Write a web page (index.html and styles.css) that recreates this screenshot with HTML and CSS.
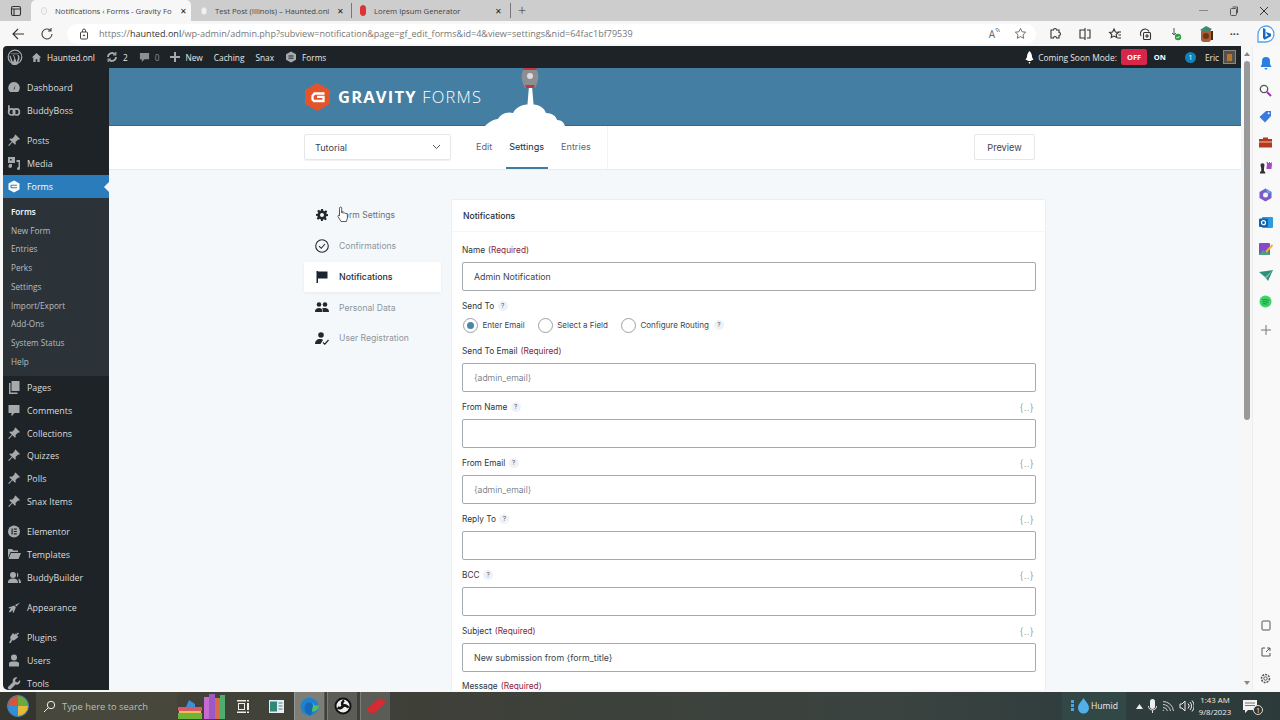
FILE: index.html
```html
<!DOCTYPE html>
<html lang="en">
<head>
<meta charset="utf-8">
<title>Notifications ‹ Forms - Gravity Forms</title>
<link rel="stylesheet" href="styles.css">
</head>
<body>
<div class="tabstrip">
  <div class="strip-btn"><svg width="14" height="14" viewBox="0 0 14 14" fill="none" stroke="#333" stroke-width="1.1"><rect x="2.5" y="2.5" width="9" height="9" rx="1.5"/><path d="M2.5 5h9M5 5v6.5" /></svg></div>
  <div class="tab tab-active"><span class="tab-fav"></span><span class="tab-title">Notifications ‹ Forms - Gravity Fo</span><span class="tab-x">✕</span></div>
  <div class="tab"><span class="tab-fav"></span><span class="tab-title">Test Post (Illinois) – Haunted.onl</span><span class="tab-x">✕</span></div>
  <div class="tab tab-sep"><span class="tab-fav tab-fav-red"></span><span class="tab-title">Lorem Ipsum Generator</span><span class="tab-x">✕</span></div>
  <div class="tab-plus">+</div>
  <div class="win-controls">
    <span class="win-min"></span>
    <svg width="10" height="10" viewBox="0 0 10 10" fill="none" stroke="#555"><rect x="1.5" y="2.5" width="6" height="7" rx="1"/><path d="M3.5 1h5v6"/></svg>
    <svg width="10" height="10" viewBox="0 0 10 10" fill="none" stroke="#333"><path d="M1 1l8 8M9 1l-8 8"/></svg>
  </div>
</div>
<div class="toolbar">
  <svg class="tb-back" width="14" height="14" viewBox="0 0 14 14" fill="none" stroke="#333" stroke-width="1.1"><path d="M13 7H2M7 2L2 7l5 5"/></svg>
  <svg class="tb-reload" width="14" height="14" viewBox="0 0 14 14" fill="none" stroke="#444" stroke-width="1.1"><path d="M12 7a5 5 0 1 1-1.6-3.7M11 1v3H8"/></svg>
  <div class="urlbar">
    <svg width="10" height="12" viewBox="0 0 10 12" fill="none" stroke="#444"><rect x="1.5" y="4" width="7" height="7" rx="1"/><path d="M3.5 4V2.5a1.5 1.5 0 0 1 3 0V4"/><circle cx="5" cy="7.5" r=".6" fill="#444"/></svg>
    <span class="url"><span class="url-dim">https://</span>haunted.onl<span class="url-dim">/wp-admin/admin.php?subview=notification&amp;page=gf_edit_forms&amp;id=4&amp;view=settings&amp;nid=64fac1bf79539</span></span>
    <span class="url-icons">
      <span class="read-aloud">A<svg width="5" height="8" viewBox="0 0 5 8" fill="none" stroke="#777" stroke-width=".8"><path d="M.5 1.500a2.500 2.500 0 0 1 2 2.500M.5 0a4 4 0 0 1 4 4"/></svg></span>
      <svg width="13" height="13" viewBox="0 0 14 14" fill="none" stroke="#666"><path d="M7 1.5l1.7 3.6 3.9.5-2.9 2.7.8 3.9L7 10.3l-3.5 1.9.8-3.900L1.400 5.600l3.900-.5z"/></svg>
    </span>
  </div>
  <div class="tb-icons">
    <svg width="14" height="14" viewBox="0 0 14 14" fill="none" stroke="#333" stroke-width="1.1"><path d="M3 3h2.500a1.500 1.500 0 0 1 3 0H11v2.500a1.500 1.500 0 0 1 0 3V11H8.500a1.500 1.500 0 0 0-3 0H3z"/></svg>
    <svg width="14" height="14" viewBox="0 0 14 14" fill="none" stroke="#333" stroke-width="1.1"><path d="M7 1v12M7 3H2v8h5M9 3h3v8H9"/></svg>
    <svg width="14" height="14" viewBox="0 0 14 14" fill="none" stroke="#333" stroke-width="1.1"><path d="M6 2l1.400 3 3 .4-2.200 2.100.6 3L6 9l-2.800 1.500.6-3L1.600 5.400l3-.4zM10 5h3M10.500 8H13M9.500 11H13"/></svg>
    <svg width="14" height="14" viewBox="0 0 14 14" fill="none" stroke="#333" stroke-width="1.1"><path d="M11 4.500A4.500 4.500 0 1 0 3 9"/><rect x="5.500" y="5.500" width="7" height="7" rx="1"/><path d="M9 7v4M7 9h4"/></svg>
    <svg width="14" height="14" viewBox="0 0 14 14" fill="none"><path d="M6 1v7M4 6l2 2 2-2" stroke="#555"/><circle cx="10" cy="10" r="3.200" fill="#2f9e44"/><path d="M8.500 10l1.100 1.100 1.900-2" stroke="#fff"/></svg>
    <svg width="16" height="18" viewBox="0 0 16 18"><rect x="3" y="4" width="10" height="13" rx="3" fill="#a5603a"/><path d="M2 5l6-4 6 3-3 2H5z" fill="#3b8a77"/><circle cx="8" cy="11" r="3" fill="#6d3517"/><rect x="13" y="6" width="2" height="9" fill="#4a2a12"/></svg>
    <span class="tb-dots">···</span>
    <svg class="tb-bing" width="22" height="22" viewBox="0 0 22 22" fill="none"><path d="M3 11a8 8 0 1 1 8 8H3z" stroke="#5aa2e8" stroke-width="1.300" fill="#fff"/><path d="M8 5l2.500 1v8l3-1.800-1.500-.8-1-2.400 5 1.800v2.500l-6.500 3.500L8 15z" fill="#1668c4"/></svg>
  </div>
</div>
<div class="main">
  <div class="wp">
    <header class="adminbar">
      <div class="ab-left">
        <svg class="ab-wp" width="16" height="16" viewBox="0 0 16 16"><circle cx="8" cy="8" r="6.800" fill="none" stroke="#a7aaad" stroke-width="1.200"/><path d="M3.300 6.200L6 13.200l1.300-3.800L6 6h1l2.600 7.200 1.200-3.700c.5-1.500.2-2.600-.7-3.500H11.500c1 .9 1.400 2.500.8 4.200l-2 5.400a6 6 0 0 1-5.400-.2L2.400 7z M4 4.400h8l-.8.800H4.800z" fill="#a7aaad"/></svg>
        <span class="ab-item"><svg width="11" height="11" viewBox="0 0 12 12"><path d="M6 1L.8 6H2.500v5h2.600V7.800h1.800V11h2.600V6h1.700z" fill="#a7aaad"/></svg>Haunted.onl</span>
        <span class="ab-item ab-upd"><svg width="12" height="12" viewBox="0 0 12 12" fill="none" stroke="#a7aaad" stroke-width="1.800"><path d="M2 6a4 4 0 0 1 7-2.600M10 6a4 4 0 0 1-7 2.600"/><path d="M9.800 1v3H7M2.200 11V8H5" stroke-width="1.200"/></svg>2</span>
        <span class="ab-item ab-com"><svg width="11" height="11" viewBox="0 0 12 12"><path d="M1 1h10v7H6l-3 3V8H1z" fill="#8c8f94"/></svg><span class="ab-dim">0</span></span>
        <span class="ab-item"><svg width="10" height="10" viewBox="0 0 10 10"><path d="M4 0h2v4h4v2H6v4H4V6H0V4h4z" fill="#a7aaad"/></svg>New</span>
        <span class="ab-item">Caching</span>
        <span class="ab-item">Snax</span>
        <span class="ab-item"><svg width="12" height="12" viewBox="0 0 12 12"><path d="M6 .5l5 2.800v5.400l-5 2.800-5-2.800V3.300z" fill="#a7aaad"/><path d="M3.500 5h5M3.500 7.200h5" stroke="#1d2327"/></svg>Forms</span>
      </div>
      <div class="ab-right">
        <svg width="9" height="13" viewBox="0 0 9 13"><path d="M4.500 0C6.500 2 7 4 7 6l1.500 3H6.500v1h-4V9H.5L2 6c0-2 .5-4 2.500-6zM3.500 11h2l-1 2z" fill="#fff"/></svg>
        <span class="coming">Coming Soon Mode:</span>
        <span class="off">OFF</span>
        <span class="on">ON</span>
        <span class="badge">1</span>
        <span class="ab-eric">Eric</span>
        <span class="avatar"><span></span></span>
      </div>
    </header>
    <div class="wp-body">
      <nav class="sidebar">
        <div class="menu-group">
          <a class="mi"><svg class="mi-ic" width="13" height="13" viewBox="0 0 13 13"><path d="M6.500 1a5.800 5.800 0 0 0-5 8.700l1 1.300h8l1-1.300a5.800 5.800 0 0 0-5-8.700zm.5 7.500H6L8 4z" fill="#a7aaad"/></svg>Dashboard</a>
          <a class="mi"><svg class="mi-ic" width="15" height="13" viewBox="0 0 15 13" fill="none" stroke="#a7aaad" stroke-width="1.800"><circle cx="5" cy="8" r="3.300"/><circle cx="10" cy="8" r="3.300"/><path d="M2 8V1"/></svg>BuddyBoss</a>
        </div>
        <div class="menu-group">
          <a class="mi"><svg class="mi-ic" width="13" height="13" viewBox="0 0 13 13"><path d="M8 .5l4.500 4.500-1 .8-.8-.3L8 8l.3 2-.8.8-2.500-2.500-3.500 3.700-.8-.7 3.600-3.600L1.800 5.200l.8-.8 2 .3L7.300 2 7 1.300z" fill="#a7aaad"/></svg>Posts</a>
          <a class="mi"><svg class="mi-ic" width="14" height="14" viewBox="0 0 14 14"><path d="M1 1h7v6H1zM3 3v1.500h1.500V3zM9.500 4H13v8.500a1.500 1.500 0 1 1-1.500-1.500V6h-2zM2 8h3v2a1.800 1.800 0 1 1-1.500-1.700H2z" fill="#a7aaad"/></svg>Media</a>
          <a class="mi mi-current"><svg class="mi-ic" width="13" height="13" viewBox="0 0 13 13"><path d="M6.500.5l5.500 3v6l-5.500 3-5.500-3v-6z" fill="#fff"/><path d="M3.500 5.200h6M3.500 7.800h6M3.500 5.200v2.600" stroke="#2c7fbd" stroke-width="1.100" fill="none"/></svg>Forms</a>
          <div class="submenu">
            <a class="si si-on">Forms</a><a class="si">New Form</a><a class="si">Entries</a><a class="si">Perks</a><a class="si">Settings</a><a class="si">Import/Export</a><a class="si">Add-Ons</a><a class="si">System Status</a><a class="si">Help</a>
          </div>
          <a class="mi"><svg class="mi-ic" width="13" height="14" viewBox="0 0 13 14"><path d="M4 1h8v10H4z M1.500 3H3v9.500h7V14H1.500z" fill="#a7aaad"/></svg>Pages</a>
          <a class="mi"><svg class="mi-ic" width="13" height="13" viewBox="0 0 13 13"><path d="M1 1h11v8H7l-3 3.500V9H1z" fill="#a7aaad"/></svg>Comments</a>
          <a class="mi"><svg class="mi-ic" width="13" height="13" viewBox="0 0 13 13"><path d="M8 .5l4.500 4.500-1 .8-.8-.3L8 8l.3 2-.8.8-2.500-2.500-3.500 3.700-.8-.7 3.600-3.600L1.800 5.200l.8-.8 2 .3L7.300 2 7 1.300z" fill="#a7aaad"/></svg>Collections</a>
          <a class="mi"><svg class="mi-ic" width="13" height="13" viewBox="0 0 13 13"><path d="M8 .5l4.500 4.500-1 .8-.8-.3L8 8l.3 2-.8.8-2.500-2.500-3.500 3.700-.8-.7 3.600-3.600L1.800 5.200l.8-.8 2 .3L7.300 2 7 1.300z" fill="#a7aaad"/></svg>Quizzes</a>
          <a class="mi"><svg class="mi-ic" width="13" height="13" viewBox="0 0 13 13"><path d="M8 .5l4.500 4.500-1 .8-.8-.3L8 8l.3 2-.8.8-2.500-2.500-3.500 3.700-.8-.7 3.600-3.600L1.800 5.200l.8-.8 2 .3L7.300 2 7 1.300z" fill="#a7aaad"/></svg>Polls</a>
          <a class="mi"><svg class="mi-ic" width="13" height="13" viewBox="0 0 13 13"><path d="M8 .5l4.500 4.500-1 .8-.8-.3L8 8l.3 2-.8.8-2.500-2.500-3.500 3.700-.8-.7 3.600-3.600L1.800 5.200l.8-.8 2 .3L7.300 2 7 1.300z" fill="#a7aaad"/></svg>Snax Items</a>
        </div>
        <div class="menu-group">
          <a class="mi"><svg class="mi-ic" width="13" height="13" viewBox="0 0 13 13"><circle cx="6.500" cy="6.500" r="6" fill="#a7aaad"/><path d="M4 3.500h1.200v6H4zM6.300 3.500h3v1.200h-3zM6.300 5.900h3v1.200h-3zM6.300 8.300h3v1.200h-3z" fill="#1d2327"/></svg>Elementor</a>
          <a class="mi"><svg class="mi-ic" width="14" height="12" viewBox="0 0 14 12"><path d="M1 1h4l1.500 1.500H11V4H3.500L1 10zM4 5h10l-2.500 6H1.500z" fill="#a7aaad"/></svg>Templates</a>
          <a class="mi"><svg class="mi-ic" width="14" height="13" viewBox="0 0 14 13"><circle cx="6" cy="4" r="3" fill="#a7aaad"/><path d="M1 12c0-3.500 2-4.500 5-4.500s5 1 5 4.500zM10 1.500a3 3 0 0 1 0 5M11.500 7.500c1.500.5 2.500 1.700 2.500 4.500h-2" fill="#a7aaad"/></svg>BuddyBuilder</a>
        </div>
        <div class="menu-group">
          <a class="mi"><svg class="mi-ic" width="13" height="13" viewBox="0 0 13 13"><path d="M12.500 1.500L7.500 4 9 5.500zM6.800 4.600L1 6.500l.6 1 1.800-.4-2 3.600 1 .8 3-2.500-.2 2.200 1 .6L8.400 6.200z" fill="#a7aaad"/></svg>Appearance</a>
        </div>
        <div class="menu-group">
          <a class="mi"><svg class="mi-ic" width="13" height="13" viewBox="0 0 13 13"><path d="M9 1.500L7 3.500 5.500 2 3 5.500c-.5 1-.3 2 .3 2.800L1.500 12h1.700l1.500-2.700c1 .3 2 .2 2.800-.5L11 6 9.500 4.500l2-2-1-1-2 2-.5-.5 1-1z" fill="#a7aaad"/></svg>Plugins</a>
          <a class="mi"><svg class="mi-ic" width="12" height="13" viewBox="0 0 12 13"><circle cx="6" cy="3.500" r="3" fill="#a7aaad"/><path d="M1 12.500V9.500C1 8 2.500 7.500 6 7.500s5 .5 5 2v3z" fill="#a7aaad"/></svg>Users</a>
          <a class="mi"><svg class="mi-ic" width="13" height="13" viewBox="0 0 13 13"><path d="M12.500 3L10 5.500 8 4.800 7.500 3 10 .5A3.500 3.500 0 0 0 5.500 5L1 9.500a1.700 1.700 0 0 0 2.500 2.500L8 7.500a3.500 3.500 0 0 0 4.500-4.500z" fill="#a7aaad"/></svg>Tools</a>
        </div>
      </nav>
      <main class="content">
        <div class="banner">
          <div class="banner-inner">
            <svg class="gf-mark" width="27" height="28" viewBox="0 0 27 28"><path d="M13.500 0L26 7v14l-12.500 7L1 21V7z" fill="#e4542b"/><path d="M20.500 10.500H10.500L8.500 13v3.500l1.500 1.500H19.500v-4.200h-6.500" fill="none" stroke="#fff" stroke-width="2.300"/></svg>
            <span class="gf-name"><b>GRAVITY</b> FORMS</span>
          </div>
          <svg class="rocket" width="90" height="58" viewBox="0 0 90 58">
            <path d="M44 18h3l2 24h-7z" fill="#fff"/>
            <path d="M0 58c3-3 8-7 13-7 2-4 8-8 15-6 3-6 11-10 17-8 7-2 14 2 16 8 6 0 10 3 11 7 5 0 7 3 8 6z" fill="#fff"/>
            <path d="M45 0h-6c-2 4-3 8-2 12l2 6 1 2h10l1-2 2-6c1-4 0-8-2-12z" fill="#8b8f93"/>
            <path d="M39 0h12l1 2H38zM40 17h10l-1 3h-8z" fill="#c8353a"/>
            <circle cx="45" cy="8" r="3" fill="#dcdcdc"/>
          </svg>
        </div>
        <div class="formbar">
          <div class="formbar-inner">
            <div class="form-select"><span>Tutorial</span><svg width="9" height="6" viewBox="0 0 9 6" fill="none" stroke="#555"><path d="M1 1l3.500 3.500L8 1"/></svg></div>
            <div class="form-tabs">
              <span class="ftab">Edit</span>
              <span class="ftab ftab-on">Settings</span>
              <span class="ftab">Entries</span>
            </div>
            <span class="preview">Preview</span>
          </div>
        </div>
        <div class="page">
          <div class="page-inner">
            <ul class="settings-nav">
              <li class="sn-item"><svg class="sn-ic" width="12" height="12" viewBox="0 0 12 12"><path d="M5 0h2l.3 1.700 1.100.5L9.900 1.200l1.400 1.400-1 1.500.5 1.100L12 5v2l-1.700.3-.5 1.100 1 1.500-1.400 1.400-1.500-1-1.100.5L7 12H5l-.3-1.700-1.100-.5-1.500 1L.7 9.400l1-1.500-.5-1.100L0 7V5l1.700-.3.5-1.100-1-1.500L2.600.7l1.500 1 1.100-.5zM6 4a2 2 0 1 0 0 4 2 2 0 0 0 0-4z" fill="#23282d" fill-rule="evenodd"/></svg><span class="sn-text sn-dark">Form Settings</span></li>
              <li class="sn-item"><svg class="sn-ic" width="14" height="14" viewBox="0 0 14 14" fill="none" stroke="#23282d" stroke-width="1.100"><circle cx="7" cy="7" r="6.300"/><path d="M4 7.200l2.200 2.100L10 5"/></svg><span class="sn-text">Confirmations</span></li>
              <li class="sn-item sn-on"><svg class="sn-ic" width="11" height="12" viewBox="0 0 11 12"><path d="M0 0h1.500v12H0zM1.500 .5H11v7H1.500z" fill="#1a2430"/></svg><span class="sn-text">Notifications</span></li>
              <li class="sn-item"><svg class="sn-ic" width="14" height="11" viewBox="0 0 14 11"><circle cx="4" cy="2.500" r="2.300" fill="#23282d"/><circle cx="10" cy="2.500" r="2.300" fill="#23282d"/><path d="M0 10c0-3 1.500-4 4-4s3.500 1 3.500 4zM8 10c0-2-.3-3-1-3.700C7.500 6 8.500 6 10 6c2.500 0 4 1 4 4z" fill="#23282d"/></svg><span class="sn-text">Personal Data</span></li>
              <li class="sn-item"><svg class="sn-ic" width="14" height="13" viewBox="0 0 14 13"><circle cx="6" cy="3" r="2.800" fill="#23282d"/><path d="M0 12c0-3 2-5 5-5 1.500 0 2.500.3 3 1l-2.500 4z" fill="#23282d"/><path d="M8 10.500l1.800 1.700L13.500 8" fill="none" stroke="#23282d" stroke-width="1.200"/></svg><span class="sn-text">User Registration</span></li>
            </ul>
            <section class="panel">
              <h2 class="panel-head">Notifications</h2>
              <div class="panel-body">
                <div class="field">
                  <div class="label">Name <em>(Required)</em></div>
                  <div class="input">Admin Notification</div>
                </div>
                <div class="field field-radio">
                  <div class="label">Send To <i class="q">?</i></div>
                  <div class="radios">
                    <span class="radio"><span class="dot dot-on"></span>Enter Email</span>
                    <span class="radio"><span class="dot"></span>Select a Field</span>
                    <span class="radio"><span class="dot"></span>Configure Routing <i class="q">?</i></span>
                  </div>
                </div>
                <div class="field">
                  <div class="label">Send To Email <em>(Required)</em></div>
                  <div class="input input-mono">{admin_email}</div>
                </div>
                <div class="field">
                  <div class="label">From Name <i class="q">?</i><span class="merge">{..}</span></div>
                  <div class="input"></div>
                </div>
                <div class="field">
                  <div class="label">From Email <i class="q">?</i><span class="merge">{..}</span></div>
                  <div class="input input-mono">{admin_email}</div>
                </div>
                <div class="field">
                  <div class="label">Reply To <i class="q">?</i><span class="merge">{..}</span></div>
                  <div class="input"></div>
                </div>
                <div class="field">
                  <div class="label">BCC <i class="q">?</i><span class="merge">{..}</span></div>
                  <div class="input"></div>
                </div>
                <div class="field">
                  <div class="label">Subject <em>(Required)</em><span class="merge">{..}</span></div>
                  <div class="input">New submission from {form_title}</div>
                </div>
                <div class="field field-last">
                  <div class="label">Message <em>(Required)</em></div>
                </div>
              </div>
            </section>
            <svg class="cursor" width="12" height="17" viewBox="0 0 12 17"><path d="M3.500 1c.8 0 1.200.5 1.200 1.200V7l.8-.3 1 .3.900-.1 1 .5 1 .1c.7.300 1 .9 1 1.500v3l-1 3.500H4l-3-5c-.4-.8.500-1.500 1.200-1l.3.400V2.200C2.500 1.500 2.800 1 3.500 1z" fill="#fff" stroke="#333" stroke-width=".8"/></svg>
          </div>
        </div>
      </main>
    </div>
  </div>
  <div class="scrollbar">
    <span class="sb-up"></span>
    <span class="sb-thumb"></span>
    <span class="sb-down"></span>
  </div>
  <aside class="edge-side">
    <div class="es-top">
      <svg width="12" height="13" viewBox="0 0 12 13"><path d="M6 0a4 4 0 0 0-4 4v3L.5 10h11L10 7V4a4 4 0 0 0-4-4zM4.500 11a1.500 1.500 0 0 0 3 0z" fill="#2a7de1"/></svg>
      <svg width="13" height="13" viewBox="0 0 13 13" fill="none"><circle cx="5" cy="5" r="3.700" stroke="#555" stroke-width="1.300"/><path d="M8 8l4 4" stroke="#a22fb5" stroke-width="2"/></svg>
      <svg width="13" height="13" viewBox="0 0 13 13"><path d="M7 1h5v5l-6 6.500L.5 7z" fill="#3b7be0"/><circle cx="9.700" cy="3.300" r="1" fill="#fff"/></svg>
      <svg width="13" height="11" viewBox="0 0 13 11"><path d="M4 2V.5h5V2h4v8.500H0V2z" fill="#b5381f"/><path d="M0 5h13" stroke="#f2c2a8"/></svg>
      <svg width="13" height="13" viewBox="0 0 13 13"><path d="M1 12.500V11l1.200-1V7.500L1.700 5a2 2 0 1 1 3.600 0L5 7.500V10l1.200 1v1.500z" fill="#333"/><path d="M7.500 8V7L8 3.500 7.500 1H9v1h1V1h1v1h1V1h.5L13 3.500 12.500 7v1z" fill="#a54ac4"/></svg>
      <svg width="13" height="14" viewBox="0 0 13 14"><path d="M6.500.5L12.500 4v6l-6 3.500-6-3.500V4z" fill="#7a5bc9"/><path d="M6.500.5L12.500 4 9 6z" fill="#4bb2e3"/><circle cx="6.500" cy="7" r="2.500" fill="#f4f4f4"/></svg>
      <svg width="14" height="13" viewBox="0 0 14 13"><rect x="3" y="1" width="11" height="11" rx="1" fill="#2a9de0"/><rect y="2.500" width="9" height="8.500" rx="1" fill="#0f63b0"/><circle cx="4.500" cy="6.700" r="2" fill="none" stroke="#fff" stroke-width="1.200"/></svg>
      <svg width="14" height="14" viewBox="0 0 14 14"><rect y="1" width="11" height="12" rx="1" fill="#8748c9"/><path d="M0 13l4-5 3 3 2-2 2 4z" fill="#42a67a"/><path d="M13.500 3L7 10" stroke="#e8b63a" stroke-width="2"/></svg>
      <svg width="14" height="12" viewBox="0 0 14 12"><path d="M0 2l14-2-5 11-3-4z" fill="#2f8f7f"/><path d="M6 7l8-7-7 9z" fill="#7fc4b0"/></svg>
      <svg width="13" height="13" viewBox="0 0 13 13" fill="none"><circle cx="6.500" cy="6.500" r="6" fill="#3dd468"/><path d="M3 5c2-.6 5-.5 7 .5M3.400 7c2-.5 4-.4 6 .5M3.800 9c1.500-.4 3-.3 4.700.4" stroke="#1c8a42"/></svg>
      <svg class="es-plus" width="10" height="10" viewBox="0 0 10 10" stroke="#777"><path d="M5 0v10M0 5h10"/></svg>
    </div>
    <div class="es-bottom">
      <svg width="10" height="11" viewBox="0 0 10 11" fill="none" stroke="#555"><rect x="1" y="1" width="8" height="9" rx="1"/></svg>
      <svg width="10" height="10" viewBox="0 0 10 10" fill="none" stroke="#555"><path d="M4 1H1v8h8V6M6 1h3v3M9 1L5 5"/></svg>
      <svg width="11" height="11" viewBox="0 0 11 11" fill="none" stroke="#555"><circle cx="5.500" cy="5.500" r="1.700"/><circle cx="5.500" cy="5.500" r="4" stroke-dasharray="2 1" stroke-width="1.500"/></svg>
    </div>
  </aside>
</div>
<footer class="taskbar">
  <div class="tk-left">
    <span class="start"><span class="orb"><i class="o1"></i><i class="o2"></i><i class="o3"></i><i class="o4"></i></span></span>
    <div class="search">
      <svg width="13" height="13" viewBox="0 0 13 13" fill="none" stroke="#eee"><circle cx="8" cy="5" r="3.700"/><path d="M5.300 7.700L1 12"/></svg>
      <span>Type here to search</span>
    </div>
    <svg class="books" width="50" height="28" viewBox="0 0 50 28"><path d="M2 15h24v4H2z" fill="#d85a6a"/><path d="M3 19h22v2H3z" fill="#e7c34c"/><path d="M2 21h24v6H2z" fill="#6fb23c"/><path d="M13 8l6 4v3h-9z" fill="#3f8fd6"/><rect x="28" y="5" width="5" height="22" fill="#c86ad0"/><rect x="33" y="2" width="6" height="25" fill="#9b59c7"/><rect x="39" y="6" width="5" height="21" fill="#d96a4a"/><rect x="44" y="3" width="5" height="24" fill="#4fae6d"/></svg>
    <svg class="tk-ic" width="14" height="13" viewBox="0 0 14 13" fill="#eee"><path d="M2 3h7v7H2zM3 4v5h5V4zM1 0h9v1.500H1zM1 11.500h9V13H1zM11 0h2v1.500h-2zM11 3h2v7h-2zM11 11.500h2V13h-2z"/></svg>
    <svg class="tk-ic tk-news" width="15" height="13" viewBox="0 0 15 13"><rect width="15" height="13" fill="#e8eef0"/><rect x="1" y="1.500" width="7" height="10" fill="#2e8a78"/><path d="M9.500 3h4M9.500 6h4M9.500 9h4" stroke="#4a7a90"/></svg>
    <span class="tk-app tk-app-on"><svg width="19" height="19" viewBox="0 0 19 19"><circle cx="9.500" cy="9.500" r="9" fill="#1d82d0"/><path d="M18.500 9.500c0 3-3 5-6 5-4 0-6-2-6-4.500 0-2.500 2-4 4-4s3.500 1 3.500 2.500h5z" fill="#4cc36a"/><path d="M13 8.500c0-2-2-3-3.500-3-3 0-5 2.500-5 5.500 0 4 3 7 6.500 7.500" fill="#1768b8"/></svg></span>
    <span class="tk-app"><svg width="18" height="18" viewBox="0 0 18 18"><circle cx="9" cy="9" r="8.500" fill="#111"/><circle cx="9" cy="9" r="6.500" fill="#eee"/><path d="M9 9a3.500 3.500 0 0 1 1-5.500A4 4 0 0 0 9 9zM9 9a3.500 3.500 0 0 1 5.300 1.800A4 4 0 0 0 9 9zM9 9a3.500 3.500 0 0 1-5.300 1.500A4 4 0 0 0 9 9z" fill="#111" stroke="#111" stroke-width="2.500"/></svg></span>
    <span class="tk-app"><svg width="20" height="16" viewBox="0 0 20 16"><path d="M1 11L12 1c3-1.500 7 0 7 3 0 1-.5 2-1.500 3L9 14.500C6 16 0 15 1 11z" fill="#d42b35"/></svg></span>
  </div>
  <div class="tk-right">
    <div class="weather">
      <svg width="21" height="18" viewBox="0 0 21 18"><path d="M1 3h3v3H1zM1 7h3v3H1zM1 11h3v3H1z" fill="#4aa5e0"/><path d="M13.500 1c2.500 4 5.500 6.500 5.500 10a5.500 5.500 0 0 1-11 0c0-3.500 3-6 5.500-10z" fill="#4fb0ea"/></svg>
      <span>Humid</span>
    </div>
    <div class="tray">
      <svg width="7" height="5" viewBox="0 0 7 5"><path d="M3.500 0L7 5H0z" fill="#eee"/></svg>
      <svg width="9" height="14" viewBox="0 0 9 14"><rect x="2" width="5" height="10" rx="2.500" fill="#eee"/><path d="M.5 7c0 2.500 1.500 4 4 4s4-1.500 4-4M4.500 11v3" fill="none" stroke="#ddd"/></svg>
      <svg width="13" height="12" viewBox="0 0 13 12" fill="none" stroke="#ccc"><path d="M2 11a1 1 0 0 1 1-1M2 7.500A4.500 4.500 0 0 1 6.500 11M2 4.500A7.500 7.500 0 0 1 9.500 11M2 1.500A10.500 10.500 0 0 1 12.500 11"/></svg>
      <svg width="15" height="12" viewBox="0 0 15 12" fill="none" stroke="#eee"><path d="M1 4v4h2l3 3V1L3 4zM9 3.500a3.500 3.500 0 0 1 0 5M11 2a6 6 0 0 1 0 8M13 .5a8 8 0 0 1 0 11"/></svg>
    </div>
    <div class="clock"><span>1:43 AM</span><span>9/8/2023</span></div>
    <span class="notif"><svg width="16" height="15" viewBox="0 0 16 15"><path d="M1 1h14v10H6l-3 3v-3H1z" fill="#f2f2f2"/><path d="M3 4h10M3 6.500h10" stroke="#777"/></svg><b>1</b></span>
  </div>
</footer>
</body>
</html>
```
FILE: styles.css
```css
* { box-sizing: border-box; }
html, body { margin: 0; padding: 0; }
body {
  width: 1280px;
  height: 720px;
  overflow: hidden;
  display: flex;
  flex-direction: column;
  background: #f7f7f7;
  font-family: "Open Sans", "Liberation Sans", sans-serif;
  color: #333;
}
ul { list-style: none; margin: 0; padding: 0; }
h2 { margin: 0; font: inherit; }
em, i { font-style: normal; }

/* Browser chrome */
.tabstrip {
  height: 21px;
  flex: none;
  display: flex;
  align-items: flex-end;
  background: #cdcdcd;
  font-size: 7.700px;
  color: #444;
}
.strip-btn { width: 31px; height: 21px; display: flex; align-items: center; justify-content: center; }
.tab {
  width: 160px;
  height: 21px;
  display: flex;
  align-items: center;
  padding: 0 8px 0 10px;
  gap: 8px;
  white-space: nowrap;
}
.tab-active { background: #f7f7f7; border-radius: 5px 5px 0 0; }
.tab-sep { border-left: 1px solid #777; border-right: 1px solid #777; height: 15px; margin-bottom: 3px; padding-left: 8px; }
.tab-fav { width: 6px; height: 8px; flex: none; border-radius: 3px; background: #f3f3f3; border: 1px solid #ddd; }
.tab-fav-red { background: #d33; border-color: #d33; height: 11px; }
.tab-title { flex: 1; }
.tab-x { font-size: 8px; color: #222; }
.tab-plus { width: 22px; text-align: center; font-size: 15px; line-height: 21px; font-weight: 300; color: #333; }
.win-controls { margin-left: auto; width: 100px; height: 21px; display: flex; align-items: center; justify-content: space-between; padding: 0 11px 0 19px; }
.win-min { width: 9px; height: 1px; background: #888; }

.toolbar {
  height: 25px;
  flex: none;
  display: flex;
  align-items: center;
  padding-left: 11px;
  background: #f7f7f7;
}
.tb-reload { margin-left: 15px; }
.urlbar {
  margin-left: 13px;
  width: 969px;
  height: 20px;
  padding: 0 9px 0 12px;
  display: flex;
  align-items: center;
  background: #fff;
  border-radius: 10px;
  font-size: 9.070px;
  color: #777;
}
.url { margin-left: 10px; white-space: nowrap; color: #333; }
.url-dim { color: #777; }
.url-icons { margin-left: auto; display: flex; align-items: center; gap: 14px; }
.read-aloud { display: flex; align-items: flex-start; font-size: 10px; line-height: 12px; color: #666; }
.tb-icons { flex: 1; display: flex; align-items: center; justify-content: space-between; padding: 0 3px 0 12px; }
.tb-dots { font-size: 11px; font-weight: 700; color: #444; }

/* Main browser area */
.main { flex: 1; min-height: 0; display: flex; background: #f7f7f7; padding-left: 3px; padding-bottom: 2px; }
.wp { width: 1238px; display: flex; flex-direction: column; min-height: 0; }

.adminbar {
  height: 22px;
  flex: none;
  display: flex;
  align-items: center;
  justify-content: space-between;
  padding: 0 5px 0 4px;
  background: #1d2327;
  color: #e8e8e8;
  font-size: 8.300px;
  border-radius: 4px 0 0 0;
}
.ab-left, .ab-right { display: flex; align-items: center; }
.ab-wp { margin-right: 8px; }
.ab-item { display: flex; align-items: center; gap: 5px; margin-right: 11px; white-space: nowrap; }
.ab-dim { color: #8c8f94; }
.coming { margin-left: 4px; font-size: 8.400px; }
.off { width: 26.500px; height: 16px; margin-left: 4px; background: #d7264a; color: #fff; border-radius: 2px; font-size: 7.500px; font-weight: 700; line-height: 16px; text-align: center; }
.on { margin-left: 6.500px; font-size: 7.500px; font-weight: 700; color: #fff; }
.badge { margin-left: 19px; width: 11px; height: 11px; border-radius: 50%; background: #1580b8; color: #fff; font-size: 7px; line-height: 11px; text-align: center; }
.ab-eric { margin-left: 9px; }
.avatar { margin-left: 4px; width: 13px; height: 14px; background: #55504a; border: 1px solid #888; display: flex; align-items: center; justify-content: center; }
.avatar span { width: 5px; height: 7px; background: #b5762f; }

.wp-body { flex: 1; min-height: 0; display: flex; }

/* Sidebar */
.sidebar {
  width: 106px;
  flex: none;
  overflow: hidden;
  padding-top: 8.200px;
  background: #1d2327;
  border-radius: 0 0 0 5px;
  display: flex;
  flex-direction: column;
  gap: 7.200px;
  color: #f0f0f1;
  font-size: 8.900px;
}
.menu-group { display: flex; flex-direction: column; }
.mi { height: 22.850px; flex: none; display: flex; align-items: center; color: #dcdcde; position: relative; }
.mi-ic { width: 14px; margin: 0 6px 0 4px; flex: none; }
.mi-current { background: #2b7cba; color: #fff; }
.mi-current::after {
  content: "";
  position: absolute;
  right: 0;
  top: 7px;
  border: 5px solid transparent;
  border-right: 5px solid #f5f8fb;
  border-left: 0;
}
.submenu { background: #2c3338; padding: 4.400px 0 5.200px; display: flex; flex-direction: column; }
.si { height: 18.750px; display: flex; align-items: center; padding-left: 8px; font-size: 8.200px; color: #b8bcc0; }
.si-on { color: #fff; font-weight: 600; }

/* Content */
.content { flex: 1; min-width: 0; display: flex; flex-direction: column; background: #f5f8fb; overflow: hidden; }
.banner { height: 58px; flex: none; background: #447fa3; position: relative; border-bottom: 1px solid #33688a; }
.banner-inner { width: 741px; height: 100%; margin-left: 195px; padding-top: 15px; display: flex; align-items: flex-start; gap: 7px; }
.gf-name { font-family: "Open Sans", sans-serif; font-size: 16.500px; font-weight: 300; line-height: 28px; color: #fff; letter-spacing: 1.200px; white-space: nowrap; }
.gf-name b { font-weight: 700; }
.rocket { position: absolute; left: 376px; top: 0; }

.formbar { height: 44px; flex: none; background: #fff; border-bottom: 1px solid #e8ebee; }
.formbar-inner { width: 741px; height: 100%; margin-left: 195px; padding: 8px 10px 0 0; display: flex; align-items: flex-start; font-family: Inter, "Open Sans", sans-serif; font-size: 9.100px; color: #3b4650; }
.form-select { width: 147px; height: 26px; display: flex; align-items: center; justify-content: space-between; padding: 0 9px 0 10px; border: 1px solid #e4e7ea; border-radius: 2px; box-shadow: 0 1px 1px rgba(0,0,0,.06); }
.form-tabs { margin: -8px 0 0 21.500px; height: 43px; display: flex; gap: 10px; border-right: 1px solid #f1f3f5; padding-right: 12.500px; }
.ftab { height: 43px; padding: 0 3.500px; display: flex; align-items: center; color: #5c6670; border-bottom: 2px solid transparent; white-space: nowrap; }
.ftab-on { color: #242c33; border-bottom-color: #3e7d9e; }
.preview { margin-left: auto; width: 61px; height: 26px; border: 1px solid #e4e7ea; border-radius: 2px; display: flex; align-items: center; justify-content: center; font-size: 9.200px; color: #3b4650; }

.page { flex: 1; min-height: 0; }
.page-inner { width: 742px; margin-left: 195px; padding-top: 29px; display: flex; align-items: flex-start; gap: 10px; position: relative; font-family: Inter, "Open Sans", sans-serif; font-size: 8.600px; color: #2b3640; }

.settings-nav { width: 137px; flex: none; padding-top: 1px; display: flex; flex-direction: column; }
.sn-item { height: 30.750px; display: flex; align-items: center; color: #8d949b; }
.sn-ic { width: 14px; margin: 0 10px 0 11px; flex: none; }
.sn-text { white-space: nowrap; }
.sn-dark { color: #6a727a; }
.sn-on { background: #fff; color: #242c33; font-weight: 500; font-size: 8.800px; box-shadow: 0 1px 3px rgba(0,0,0,.06); }

.panel { flex: 1; min-width: 0; background: #fff; border: 1px solid #eceff2; border-radius: 2px 2px 0 0; }
.panel-head { height: 32px; padding: 0 11px; display: flex; align-items: center; font-weight: 500; color: #242c33; border-bottom: 1px solid #f3f5f7; }
.panel-body { padding: 11px 9px 0 10px; display: flex; flex-direction: column; gap: 8px; }
.field { display: flex; flex-direction: column; gap: 5px; }
.field-last { margin-top: -1px; }
.label { height: 14px; display: flex; align-items: center; gap: 3px; font-size: 8.300px; color: #2b3640; white-space: nowrap; }
.label em { color: #8a1c3b; }
.q { width: 10px; height: 10px; margin-left: .5px; border-radius: 50%; background: #eef1f7; color: #55606a; font-size: 6.500px; line-height: 10px; text-align: center; }
.merge { margin-left: auto; margin-right: 2px; color: #7a828a; font-size: 9.500px; font-weight: 300; letter-spacing: .3px; }
.input { height: 29px; display: flex; align-items: center; padding: 0 11px; background: #fff; border: 1px solid #a6abb0; border-radius: 2px; font-size: 8.800px; color: #3b4650; }
.input-mono { font-size: 8.700px; font-weight: 300; color: #5b646c; }
.field-radio { gap: 1px; }
.radios { height: 22px; padding-left: 1px; display: flex; align-items: center; font-size: 8px; color: #3b4650; }
.radio { display: flex; align-items: center; gap: 4.500px; margin-right: 13px; white-space: nowrap; }
.dot { width: 15px; height: 15px; border-radius: 50%; border: 1px solid #9aa0a6; background: #fff; display: flex; align-items: center; justify-content: center; }
.dot-on::before { content: ""; width: 7px; height: 7px; border-radius: 50%; background: #4a86a8; }
.cursor { position: absolute; left: 33px; top: 36px; }

/* Scrollbar */
.scrollbar { width: 11px; flex: none; display: flex; flex-direction: column; align-items: center; background: #f7f7f7; padding: 6px 0 5px 0; }
.sb-up { width: 0; height: 0; border: 3.500px solid transparent; border-bottom: 4px solid #888; border-top: 0; }
.sb-thumb { width: 6px; height: 359px; margin: 5px 0 0; background: #999; border-radius: 3px; }
.sb-down { margin-top: auto; width: 0; height: 0; border: 3.500px solid transparent; border-top: 4px solid #888; border-bottom: 0; }

/* Edge sidebar */
.edge-side { flex: 1; display: flex; flex-direction: column; justify-content: space-between; align-items: center; padding: 11px 2px 6px 0; background: #f9f9f9; border-left: 1px solid #ececec; }
.es-top { display: flex; flex-direction: column; align-items: center; gap: 13.600px; }
.es-plus { margin-top: 3px; }
.es-bottom { display: flex; flex-direction: column; align-items: center; gap: 16px; }

/* Taskbar */
.taskbar { height: 28px; flex: none; display: flex; justify-content: space-between; background: linear-gradient(90deg, #45453a 0%, #3f4038 30%, #3a4340 70%, #2f3d3d 85%, #2d3a3a 100%); color: #eee; }
.tk-left, .tk-right { display: flex; align-items: center; }
.start { width: 36px; height: 28px; background: #33352e; display: flex; align-items: center; justify-content: center; }
.orb { width: 22px; height: 22px; border-radius: 50%; overflow: hidden; display: grid; grid-template-columns: 1fr 1fr; grid-template-rows: 1fr 1fr; border: 1px solid #4c86b8; background: #2a6fb0; }
.o1 { background: #d8553a; } .o2 { background: #6eaa3a; } .o3 { background: #2f8fd8; } .o4 { background: #e5b93a; }
.search { width: 141px; height: 28px; padding-left: 7px; display: flex; align-items: center; gap: 6px; background: #47473b; font-size: 9.350px; color: #bdbdb5; white-space: nowrap; }
.books { margin-left: -1px; }
.tk-ic { margin-left: 10px; }
.tk-news { margin-left: 19px; margin-right: 10px; }
.tk-app { width: 31px; height: 28px; margin-right: 2px; display: flex; align-items: center; justify-content: center; background: rgba(255,255,255,.15); border-left: 1px solid rgba(255,255,255,.2); border-right: 1px solid rgba(0,0,0,.3); }
.tk-app-on { background: rgba(255,255,255,.32); }
.weather { width: 64px; height: 28px; display: flex; align-items: center; gap: 0; padding-left: 8px; background: #324847; font-size: 8.600px; color: #eee; }
.tray { width: 58px; display: flex; align-items: center; justify-content: space-between; margin-left: 10px; }
.clock { width: 42px; display: flex; flex-direction: column; align-items: center; font-size: 7.800px; line-height: 12px; color: #eee; white-space: nowrap; }
.notif { width: 28px; margin-right: 16px; position: relative; display: flex; justify-content: center; }
.notif b { position: absolute; right: 1px; top: 6px; width: 10px; height: 10px; border-radius: 50%; background: #333; border: 1px solid #ddd; font-size: 6.500px; font-weight: 400; line-height: 9px; text-align: center; color: #fff; }
```
